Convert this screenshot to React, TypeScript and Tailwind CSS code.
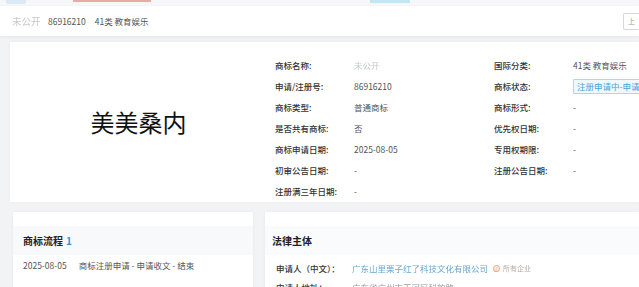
import React from "react";

const font = { fontFamily: '"Noto Sans CJK SC", "Noto Sans", sans-serif' };

const left: [string, string, boolean?][] = [
  ["商标名称:", "未公开", true],
  ["申请/注册号:", "86916210"],
  ["商标类型:", "普通商标"],
  ["是否共有商标:", "否"],
  ["商标申请日期:", "2025-08-05"],
  ["初审公告日期:", "-"],
  ["注册满三年日期:", "-"],
];

const right: [string, string][] = [
  ["国际分类:", "41类 教育娱乐"],
  ["商标状态:", "TAG"],
  ["商标形式:", "-"],
  ["优先权日期:", "-"],
  ["专用权期限:", "-"],
  ["注册公告日期:", "-"],
];

export default function App() {
  return (
    <div
      className="w-[639px] h-[287px] overflow-hidden bg-[#f2f3f5] flex flex-col text-[8.5px] text-[#444]"
      style={font}
    >
      {/* top strip */}
      <div className="h-[6px] flex items-start bg-[#f6f7f8] shrink-0">
        <div className="ml-[6px] w-[20px] h-[4px] bg-[#dbe9f5] rounded-b-[2px] shrink-0" />
        <div className="ml-[47px] w-[78px] h-[2px] bg-[#e9a9a4] shrink-0" />
        <div className="ml-[219px] w-[40px] h-[3px] bg-[#bfe8f3] shrink-0" />
      </div>

      {/* header bar */}
      <div className="h-[30px] bg-white flex items-center pl-[12px] shrink-0 shadow-[0_1px_3px_rgba(0,0,0,0.06)]">
        <span className="w-[36px] text-[9.5px] text-[#c4c6ca] blur-[0.7px] shrink-0">未公开</span>
        <span className="text-[#555] shrink-0">86916210</span>
        <span className="ml-[9px] text-[#555] shrink-0">41类 教育娱乐</span>
        <div className="ml-auto w-[16px] h-[17px] border border-[#d8d8d8] rounded-l-[2px] border-r-0 flex items-center justify-center text-[7px] text-[#999] shrink-0">
          上
        </div>
      </div>

      {/* main card */}
      <div className="mt-[6px] ml-[10px] h-[160px] bg-white flex shrink-0 overflow-hidden shadow-[0_0_3px_rgba(0,0,0,0.05)]">
        <div className="w-[257px] shrink-0 flex items-center justify-center">
          <span className="text-[24px] text-[#111]">美美桑内</span>
        </div>
        <div className="flex pt-[13px] shrink-0">
          <div className="flex flex-col shrink-0">
            {left.map(([l, v, blur]) => (
              <div key={l} className="h-[21px] flex items-center">
                <span className="w-[79px] ml-[8px] shrink-0 text-[#333] font-medium whitespace-nowrap">{l}</span>
                <span
                  className={
                    blur
                      ? "w-[140px] shrink-0 text-[#c4c6ca] blur-[0.5px]"
                      : "w-[140px] shrink-0 text-[#555]"
                  }
                >
                  {v}
                </span>
              </div>
            ))}
          </div>
          <div className="flex flex-col shrink-0">
            {right.map(([l, v]) => (
              <div key={l} className="h-[21px] flex items-center">
                <span className="w-[79px] shrink-0 text-[#333] font-medium whitespace-nowrap">{l}</span>
                {v === "TAG" ? (
                  <span className="h-[15px] px-[3px] flex items-center border border-[#a9d8ef] bg-[#eef8fd] text-[#4aa3d8] whitespace-nowrap rounded-[1px] shrink-0">
                    注册申请中-申请收文
                  </span>
                ) : (
                  <span className="text-[#555] whitespace-nowrap">{v}</span>
                )}
              </div>
            ))}
          </div>
        </div>
      </div>

      {/* bottom cards */}
      <div className="mt-[10px] flex gap-[12px] ml-[13px] grow">
        <div className="w-[240px] shrink-0 bg-white flex flex-col shadow-[0_0_3px_rgba(0,0,0,0.05)]">
          <div className="h-[29px] mt-[14px] bg-[#f8f9fb] flex items-center pl-[10px]">
            <span className="text-[10px] font-bold text-[#222]">商标流程</span>
            <span className="text-[10px] font-bold text-[#3d8fd6] ml-[3px]">1</span>
          </div>
          <div className="flex items-center mt-[4px] pl-[10px] text-[#555]">
            <span>2025-08-05</span>
            <span className="ml-[12px]">商标注册申请 - 申请收文 - 结束</span>
          </div>
        </div>
        <div className="grow bg-white flex flex-col shadow-[0_0_3px_rgba(0,0,0,0.05)]">
          <div className="h-[29px] mt-[14px] bg-[#fafbfc] flex items-center pl-[7px]">
            <span className="text-[10px] font-bold text-[#222]">法律主体</span>
          </div>
          <div className="flex items-center mt-[7px] pl-[11px]">
            <span className="w-[76px] shrink-0 text-[#333] font-medium whitespace-nowrap">申请人（中文）：</span>
            <span className="text-[#6aa6cf] blur-[0.3px] whitespace-nowrap">广东山里栗子红了科技文化有限公司</span>
            <span className="ml-[5px] w-[7px] h-[7px] rounded-full border border-[#f0a070] text-[5px] text-[#f0a070] flex items-center justify-center shrink-0">
              企
            </span>
            <span className="ml-[3px] text-[#b7a9a0] text-[7px] blur-[0.3px] whitespace-nowrap">所有企业</span>
          </div>
          <div className="flex items-center mt-[6px] pl-[11px]">
            <span className="w-[76px] shrink-0 text-[#333] font-medium whitespace-nowrap">申请人地址：</span>
            <span className="text-[#999] blur-[0.5px] whitespace-nowrap">广东省广州市天河区科韵路</span>
          </div>
        </div>
      </div>
    </div>
  );
}
